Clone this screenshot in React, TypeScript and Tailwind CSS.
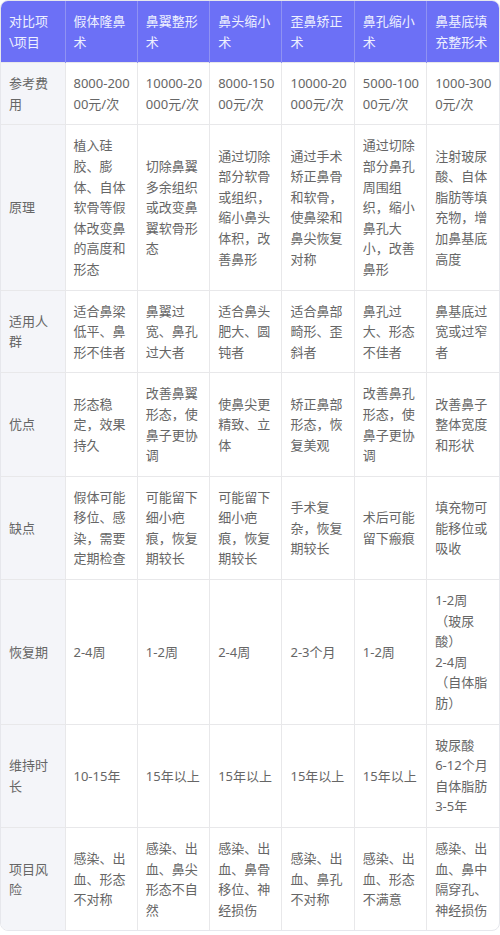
const headers = ['对比项\\项目', '假体隆鼻术', '鼻翼整形术', '鼻头缩小术', '歪鼻矫正术', '鼻孔缩小术', '鼻基底填充整形术'];

const rows: string[][] = [
  ['参考费用', '8000-20000元/次', '10000-20000元/次', '8000-15000元/次', '10000-20000元/次', '5000-10000元/次', '1000-3000元/次'],
  [
    '原理',
    '植入硅胶、膨体、自体软骨等假体改变鼻的高度和形态',
    '切除鼻翼多余组织或改变鼻翼软骨形态',
    '通过切除部分软骨或组织，缩小鼻头体积，改善鼻形',
    '通过手术矫正鼻骨和软骨，使鼻梁和鼻尖恢复对称',
    '通过切除部分鼻孔周围组织，缩小鼻孔大小，改善鼻形',
    '注射玻尿酸、自体脂肪等填充物，增加鼻基底高度',
  ],
  ['适用人群', '适合鼻梁低平、鼻形不佳者', '鼻翼过宽、鼻孔过大者', '适合鼻头肥大、圆钝者', '适合鼻部畸形、歪斜者', '鼻孔过大、形态不佳者', '鼻基底过宽或过窄者'],
  ['优点', '形态稳定，效果持久', '改善鼻翼形态，使鼻子更协调', '使鼻尖更精致、立体', '矫正鼻部形态，恢复美观', '改善鼻孔形态，使鼻子更协调', '改善鼻子整体宽度和形状'],
  ['缺点', '假体可能移位、感染，需要定期检查', '可能留下细小疤痕，恢复期较长', '可能留下细小疤痕，恢复期较长', '手术复杂，恢复期较长', '术后可能留下瘢痕', '填充物可能移位或吸收'],
  ['恢复期', '2-4周', '1-2周', '2-4周', '2-3个月', '1-2周', '1-2周\n（玻尿酸）\n2-4周\n（自体脂肪）'],
  ['维持时长', '10-15年', '15年以上', '15年以上', '15年以上', '15年以上', '玻尿酸\n6-12个月\n自体脂肪\n3-5年'],
  ['项目风险', '感染、出血、形态不对称', '感染、出血、鼻尖形态不自然', '感染、出血、鼻骨移位、神经损伤', '感染、出血、鼻孔不对称', '感染、出血、形态不满意', '感染、出血、鼻中隔穿孔、神经损伤'],
];

export default function App() {
  return (
    <div
      className="w-[500px] h-[935px] bg-white"
      style={{ fontFamily: '"Noto Sans", "Noto Sans CJK SC", sans-serif' }}
    >
      <div className="overflow-hidden rounded-lg border border-[#e6e7ec]">
        <table className="w-full table-fixed border-collapse text-[13px] leading-[20.6px]">
          <colgroup>
            <col className="w-[64px]" />
            <col />
            <col />
            <col />
            <col />
            <col />
            <col />
          </colgroup>
          <thead>
            <tr className="bg-[#6c70f6] text-[#eef0ff]">
              {headers.map((h) => (
                <th
                  key={h}
                  className="border-l border-[#8f92f3] first:border-l-0 pl-[8px] pr-[6px] py-[10px] text-left align-middle font-normal break-all"
                >
                  {h}
                </th>
              ))}
            </tr>
          </thead>
          <tbody>
            {rows.map((row) => (
              <tr key={row[0]} className="border-t border-[#e8e8ea]">
                {row.map((cell, i) => (
                  <td
                    key={i}
                    className={
                      i === 0
                        ? 'bg-[#f4f5f9] text-[#666] pl-[8px] pr-[6px] py-[10px] align-middle break-all'
                        : 'border-l border-[#e8e8ea] text-[#666] pl-[8px] pr-[6px] py-[10px] align-middle break-all whitespace-pre-line'
                    }
                  >
                    {cell}
                  </td>
                ))}
              </tr>
            ))}
          </tbody>
        </table>
      </div>
    </div>
  );
}
